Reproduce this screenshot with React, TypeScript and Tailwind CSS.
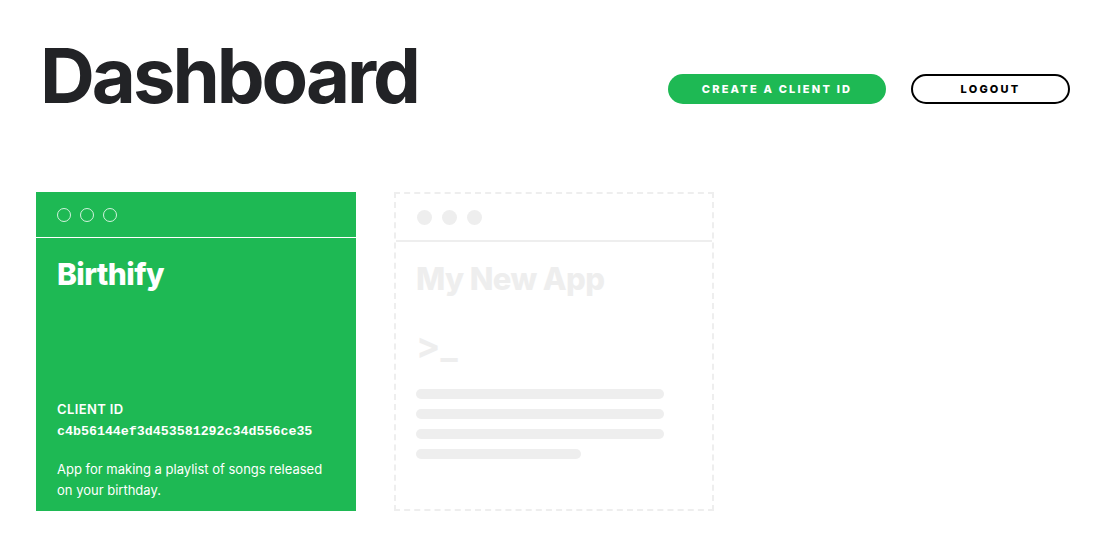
export default function App() {
  return (
    <div className="min-h-screen bg-white font-['Inter',sans-serif] text-[#222326]">
      <header className="flex items-start justify-between pl-[40px] pr-[48px] pt-[37px]">
        <h1 className="text-[76px] font-bold leading-none tracking-[-0.04em]">Dashboard</h1>
        <div className="mt-[37px] flex items-center gap-[25px]">
          <button className="h-[30px] w-[218px] rounded-full bg-[#1eb954] text-[11px] font-extrabold uppercase tracking-[0.2em] text-white">
            Create a client ID
          </button>
          <button className="h-[30px] w-[159px] rounded-full border-2 border-black text-[11px] font-extrabold uppercase tracking-[0.2em] text-black">
            Logout
          </button>
        </div>
      </header>

      <main className="mt-[79px] flex gap-[38px] pl-[36px]">
        <div className="flex h-[319px] w-[320px] flex-col bg-[#1eb954] text-white">
          <div className="flex h-[46px] items-center gap-[9px] border-b border-white pl-[21px]">
            <span className="h-[14px] w-[14px] rounded-full border border-white/80" />
            <span className="h-[14px] w-[14px] rounded-full border border-white/80" />
            <span className="h-[14px] w-[14px] rounded-full border border-white/80" />
          </div>
          <div className="flex flex-1 flex-col px-[21px] pt-[18px]">
            <h2 className="text-[30px] font-extrabold leading-tight tracking-[-0.02em]">Birthify</h2>
            <div className="mt-auto pb-[10px]">
              <div className="text-[13px] font-semibold uppercase tracking-[0.03em]">Client ID</div>
              <div className="mt-[3px] font-['Liberation_Mono',monospace] text-[13.3px] font-bold">
                c4b56144ef3d453581292c34d556ce35
              </div>
              <p className="mt-[17px] text-[13px] leading-[21px]">
                App for making a playlist of songs released on your birthday.
              </p>
            </div>
          </div>
        </div>

        <div className="flex h-[319px] w-[320px] flex-col border-2 border-dashed border-[#eeeeee]">
          <div className="flex h-[48px] items-center gap-[10px] border-b-2 border-[#eeeeee] pl-[21px]">
            <span className="h-[15px] w-[15px] rounded-full bg-[#eeeeee]" />
            <span className="h-[15px] w-[15px] rounded-full bg-[#eeeeee]" />
            <span className="h-[15px] w-[15px] rounded-full bg-[#eeeeee]" />
          </div>
          <div className="flex flex-col px-[20px] pt-[18px] text-[#eeeeee]">
            <h2 className="text-[31px] font-extrabold leading-tight tracking-[-0.02em]">My New App</h2>
            <div className="mt-[28px] text-[36px] font-bold leading-none">&gt;_</div>
            <div className="mt-[26px] flex flex-col gap-[10px]">
              <div className="h-[10px] w-[248px] rounded-full bg-[#eeeeee]" />
              <div className="h-[10px] w-[248px] rounded-full bg-[#eeeeee]" />
              <div className="h-[10px] w-[248px] rounded-full bg-[#eeeeee]" />
              <div className="h-[10px] w-[165px] rounded-full bg-[#eeeeee]" />
            </div>
          </div>
        </div>
      </main>
    </div>
  )
}
